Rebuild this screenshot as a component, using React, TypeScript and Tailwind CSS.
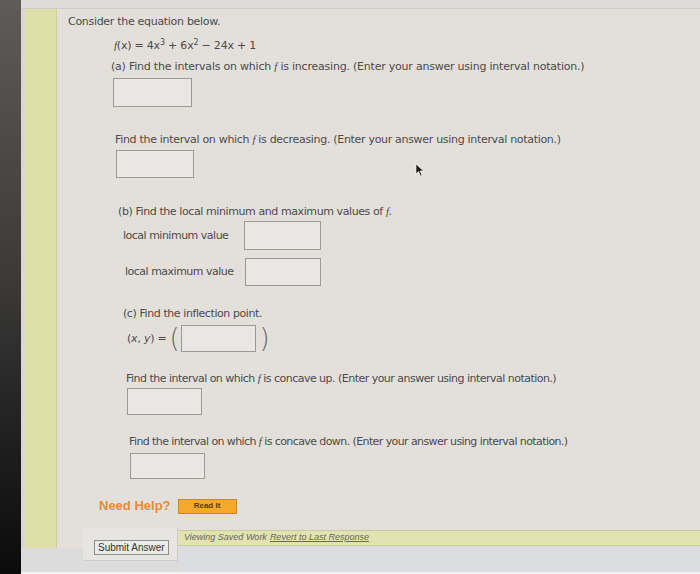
import React from "react";

const font = { fontFamily: '"DejaVu Sans", Verdana, sans-serif' };

function Box({ cls }: { cls: string }) {
  return <div className={`border border-[#9c9a97] bg-[#e9e7e4] ${cls}`} />;
}

function F() {
  return <i className="font-serif italic" style={{ fontFamily: '"Liberation Serif", serif' }}>f</i>;
}

export default function App() {
  return (
    <div className="w-[700px] h-[574px] flex overflow-hidden bg-[#e3e0dc]" style={font}>
      <div className="w-[21px] h-full bg-gradient-to-b from-[#5e5c5a] via-[#3a3938] to-[#0b0b0b]" />
      <div className="flex-1 flex flex-col">
        <div className="h-[9px] bg-[#dddbd8] border-b border-[#cfcdca]" />
        <div className="h-[519px] flex">
          <div className="w-[4px] bg-[#d9d7d3]" />
          <div className="w-[32px] bg-[#dfe0a8] border-r border-[#cfd09a]" />
          <div className="flex-1 flex flex-col text-[11px] leading-[14px] text-[#4b4a48] tracking-[-0.22px]">
            <div className="mt-[6px] h-[14px] pl-[11px] tracking-[-0.3px]">Consider the equation below.</div>
            <div className="mt-[9px] h-[14px] pl-[57px]">
              <F />(<span>x</span>) = 4x<sup className="text-[8px]">3</sup> + 6x<sup className="text-[8px]">2</sup> − 24x + 1
            </div>
            <div className="mt-[7px] h-[14px] pl-[54px]">
              (a) Find the intervals on which <F /> is increasing. (Enter your answer using interval notation.)
            </div>
            <div className="mt-[5px] pl-[56px]"><Box cls="w-[79px] h-[29px]" /></div>
            <div className="mt-[25px] h-[14px] pl-[58px] tracking-[-0.31px]">
              Find the interval on which <F /> is decreasing. (Enter your answer using interval notation.)
            </div>
            <div className="mt-[4px] pl-[59px] relative">
              <Box cls="w-[78px] h-[28px]" />
              <svg className="absolute left-[358px] top-[13px]" width="10" height="14" viewBox="0 0 10 14">
                <path d="M1 1 L1 11 L3.5 8.5 L5.5 13 L7 12.3 L5 8 L8.5 8 Z" fill="#1a1a1a" stroke="#fff" strokeWidth="0.6" />
              </svg>
            </div>
            <div className="mt-[26px] h-[14px] pl-[61px] tracking-[-0.41px]">
              (b) Find the local minimum and maximum values of <F />.
            </div>
            <div className="mt-[3px] h-[29px] flex items-center pl-[66px] tracking-[-0.5px]">
              <span className="w-[121px]">local minimum value</span>
              <Box cls="w-[77px] h-[29px]" />
            </div>
            <div className="mt-[8px] h-[28px] flex items-center pl-[68px] tracking-[-0.5px]">
              <span className="w-[120px]">local maximum value</span>
              <Box cls="w-[76px] h-[28px]" />
            </div>
            <div className="mt-[21px] h-[14px] pl-[66px] tracking-[-0.42px]">(c) Find the inflection point.</div>
            <div className="mt-[4px] h-[27px] flex items-center pl-[70px]">
              <span>(<i>x</i>, <i>y</i>) = </span>
              <span className="text-[26px] leading-[27px] font-light ml-[3px] mr-[1px] text-[#6a6866]">(</span>
              <Box cls="w-[75px] h-[27px]" />
              <span className="text-[26px] leading-[27px] font-light ml-[4px] text-[#6a6866]">)</span>
            </div>
            <div className="mt-[19px] h-[14px] pl-[69px] tracking-[-0.52px]">
              Find the interval on which <F /> is concave up. (Enter your answer using interval notation.)
            </div>
            <div className="mt-[3px] pl-[70px]"><Box cls="w-[75px] h-[27px]" /></div>
            <div className="mt-[19px] h-[14px] pl-[72px] tracking-[-0.59px]">
              Find the interval on which <F /> is concave down. (Enter your answer using interval notation.)
            </div>
            <div className="mt-[5px] pl-[73px]"><Box cls="w-[75px] h-[26px]" /></div>
            <div className="mt-[19px] h-[16px] flex items-center pl-[42px]">
              <span className="text-[13px] font-bold text-[#e78a35] tracking-normal" style={{ fontFamily: '"Liberation Sans", Arial, sans-serif' }}>Need Help?</span>
              <span
                className="ml-[7px] w-[59px] h-[15px] flex items-center justify-center bg-[#f4a92a] border border-[#c98a24] text-[8px] font-bold text-[#5a3a10] tracking-normal"
                style={{ fontFamily: '"Liberation Sans", Arial, sans-serif' }}
              >
                Read It
              </span>
            </div>
          </div>
        </div>
        <div className="flex-1 flex">
          <div className="w-[4px] flex flex-col">
            <div className="h-[20px] bg-[#d9d7d3]" />
            <div className="flex-1 bg-[#dcdcdc]" />
          </div>
          <div className="w-[32px] flex flex-col">
            <div className="h-[20px] bg-[#dfe0a8] border-r border-[#cfd09a]" />
            <div className="flex-1 bg-[#dcdcdc]" />
          </div>
          <div className="w-[26px] flex flex-col">
            <div className="h-[20px] bg-[#e3e0dc]" />
            <div className="flex-1 bg-[#dcdcdc]" />
          </div>
          <div className="w-[95px] flex flex-col">
            <div className="h-[33px] bg-[#e7e5e2] border-r border-b border-[#cfcdca] flex items-end pl-[11px] pb-[5px]">
              <span
                className="h-[15px] px-[3px] flex items-center border border-[#8e8e8e] bg-[#ebebeb] text-[10px] text-[#333]"
                style={{ fontFamily: '"Liberation Sans", Arial, sans-serif' }}
              >
                Submit Answer
              </span>
            </div>
            <div className="flex-1 bg-[#dcdcdc]" />
          </div>
          <div className="flex-1 flex flex-col">
            <div className="h-[2px] bg-[#e3e0dc]" />
            <div
              className="h-[16px] bg-[#e2e3b0] border-t border-b border-[#c9caa0] flex items-center pl-[6px] text-[9px] italic text-[#666]"
              style={{ fontFamily: '"Liberation Sans", Arial, sans-serif' }}
            >
              Viewing Saved Work <span className="underline ml-[3px]">Revert to Last Response</span>
            </div>
            <div className="flex-1 bg-[#dcdde0]" />
          </div>
        </div>
        <div className="h-[2px] bg-[#f2f2f2]" />
      </div>
    </div>
  );
}
